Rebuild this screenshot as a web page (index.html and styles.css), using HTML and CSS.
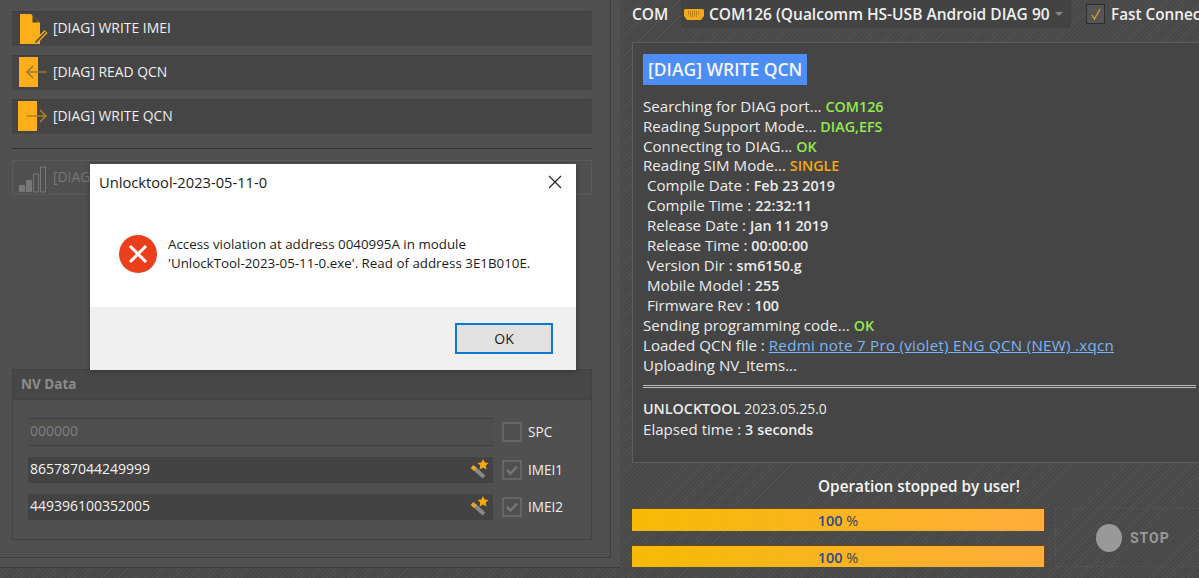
FILE: index.html
```html
<!DOCTYPE html>
<html lang="en">
<head>
<meta charset="utf-8">
<title>UnlockTool</title>
<link rel="stylesheet" href="styles.css">
</head>
<body>
<main class="app">
  <section class="left">
    <div class="left-panel">
      <button class="action">
        <svg class="ico" width="31" height="34" viewBox="0 0 31 34"><path d="M3 2h11l9 9v21H3z" fill="#fdae19"/><path d="M15.500 3l6.500 7.500h-6.500z" fill="#4a4336"/><path d="M18 31l11-11.500" stroke="#f0a81e" stroke-width="4.200"/><path d="M18.500 30.500l10-10.500" stroke="#4f4a40" stroke-width="1.500"/></svg>
        <span>[DIAG] WRITE IMEI</span>
      </button>
      <button class="action">
        <svg class="ico" width="31" height="34" viewBox="0 0 31 34"><path d="M2 1h19v30H2z" fill="#fdae19"/><path d="M30 16H11M16 10l-6 6 6 6" fill="none" stroke="#9a7a30" stroke-width="1.600"/></svg>
        <span>[DIAG] READ QCN</span>
      </button>
      <button class="action">
        <svg class="ico" width="31" height="34" viewBox="0 0 31 34"><path d="M1 1h19v30H1z" fill="#fdae19"/><path d="M10 16h19M23 10l6 6-6 6" fill="none" stroke="#a8802c" stroke-width="1.600"/></svg>
        <span>[DIAG] WRITE QCN</span>
      </button>
      <hr class="rule">
      <button class="action disabled">
        <svg class="ico" width="31" height="34" viewBox="0 0 31 34"><path d="M2 24h6v7H2zM9 19h6v12H9z" fill="#777"/><path d="M16.500 13h5v18h-5zM23.500 6h5v25h-5z" fill="none" stroke="#777"/></svg>
        <span>[DIAG</span>
      </button>
      <section class="nv">
        <h2 class="nv-head">NV Data</h2>
        <div class="nv-body">
          <div class="nv-row first">
            <div class="field empty">000000</div>
            <span class="check"></span><span class="nv-label">SPC</span>
          </div>
          <div class="nv-row">
            <div class="field">865787044249999
              <svg class="wand" width="19" height="20" viewBox="0 0 19 20"><path d="M4 9l10 9" stroke="#8a8a8a" stroke-width="4"/><path d="M2 7.500l3.500 3" stroke="#f0a81e" stroke-width="4"/><path d="M13 0l1.700 3.600 3.800.4-2.800 2.600.8 3.800-3.500-2-3.500 2 .8-3.800L7.500 4l3.800-.4z" fill="#f7a90f"/></svg>
            </div>
            <span class="check on"><svg width="14" height="12" viewBox="0 0 14 12"><path d="M2 6l3.500 3.500L12 2.500" fill="none" stroke="#777" stroke-width="2.500"/></svg></span><span class="nv-label">IMEI1</span>
          </div>
          <div class="nv-row">
            <div class="field">449396100352005
              <svg class="wand" width="19" height="20" viewBox="0 0 19 20"><path d="M4 9l10 9" stroke="#8a8a8a" stroke-width="4"/><path d="M2 7.500l3.500 3" stroke="#f0a81e" stroke-width="4"/><path d="M13 0l1.700 3.600 3.800.4-2.800 2.600.8 3.800-3.500-2-3.500 2 .8-3.800L7.500 4l3.800-.4z" fill="#f7a90f"/></svg>
            </div>
            <span class="check on"><svg width="14" height="12" viewBox="0 0 14 12"><path d="M2 6l3.500 3.500L12 2.500" fill="none" stroke="#777" stroke-width="2.500"/></svg></span><span class="nv-label">IMEI2</span>
          </div>
        </div>
      </section>
    </div>
  </section>

  <section class="right">
    <div class="com-row">
      <span class="com-label">COM</span>
      <div class="com-select">
        <svg class="port" width="20" height="11" viewBox="0 0 20 11"><path d="M1 0h18l1 1v6l-3 4H3L0 7V1z" fill="#f6a81c"/><path d="M4 3h12M4 5h12M6 7h8" stroke="#8a5a10" stroke-dasharray="1 1"/></svg>
        <span class="com-name">COM126 (Qualcomm HS-USB Android DIAG 90</span>
        <span class="caret"></span>
      </div>
      <span class="check fast"><svg width="14" height="15" viewBox="0 0 14 15"><path d="M3 8l2.500 4L11 2" fill="none" stroke="#d8a030" stroke-width="1.300"/></svg></span>
      <span class="fast-label">Fast Connec</span>
    </div>

    <div class="log">
      <div class="log-title">[DIAG] WRITE QCN</div>
      <div class="log-lines">
        <p>Searching for DIAG port... <b class="ok">COM126</b></p>
        <p>Reading Support Mode... <b class="ok">DIAG,EFS</b></p>
        <p>Connecting to DIAG... <b class="ok">OK</b></p>
        <p>Reading SIM Mode... <b class="warn">SINGLE</b></p>
        <p class="tall">&nbsp;Compile Date : <b>Feb 23 2019</b></p>
        <p class="tall">&nbsp;Compile Time : <b>22:32:11</b></p>
        <p class="tall">&nbsp;Release Date : <b>Jan 11 2019</b></p>
        <p class="tall">&nbsp;Release Time : <b>00:00:00</b></p>
        <p class="tall">&nbsp;Version Dir : <b>sm6150.g</b></p>
        <p class="tall">&nbsp;Mobile Model : <b>255</b></p>
        <p class="tall">&nbsp;Firmware Rev : <b>100</b></p>
        <p class="tall">Sending programming code... <b class="ok">OK</b></p>
        <p class="tall">Loaded QCN file : <a class="link">Redmi note 7 Pro (violet) ENG QCN (NEW) .xqcn</a></p>
        <p class="tall">Uploading NV_Items...</p>
      </div>
      <hr class="log-rule">
      <p class="tall"><b>UNLOCKTOOL</b> <span class="ver">2023.05.25.0</span></p>
      <p class="tall">Elapsed time : <b>3</b> <b>seconds</b></p>
    </div>

    <div class="status">Operation stopped by user!</div>
    <div class="bottom">
      <div class="bars">
        <div class="bar"><b>100</b>&nbsp;%</div>
        <div class="bar short"><b>100</b>&nbsp;%</div>
      </div>
      <div class="stop"><span class="stop-dot"></span><span>STOP</span></div>
    </div>
  </section>
</main>

<div class="dialog" role="dialog">
  <div class="dialog-top">
    <div class="dialog-title">
      <span>Unlocktool-2023-05-11-0</span>
      <svg width="14" height="14" viewBox="0 0 14 14"><path d="M1 1l12 12M13 1L1 13" stroke="#222" stroke-width="1.100"/></svg>
    </div>
    <div class="dialog-msg">
      <svg width="38" height="38" viewBox="0 0 38 38"><circle cx="19" cy="19" r="19" fill="#ea3f1a"/><path d="M11 11l16 16M27 11L11 27" stroke="#fff" stroke-width="3"/></svg>
      <p>Access violation at address 0040995A in module<br>'UnlockTool-2023-05-11-0.exe'. Read of address 3E1B010E.</p>
    </div>
  </div>
  <div class="dialog-foot"><button class="ok-btn">OK</button></div>
</div>
</body>
</html>
```
FILE: styles.css
```css
* { box-sizing: border-box; }
html, body { margin: 0; height: 100%; overflow: hidden; }
body {
  width: 1199px;
  height: 578px;
  position: relative;
  font-family: "Open Sans", "Noto Sans", sans-serif;
  font-size: 13px;
  color: #f0f0f0;
  background: #4b4b4b repeating-linear-gradient(135deg, #505050 0 1px, #484848 1px 3px);
}
p { margin: 0; }
.app { display: flex; height: 568px; }

.left { width: 620px; flex: none; background: #505050; border-bottom: 1px solid #3d3d3d; }
.left-panel {
  width: 611px;
  height: 558px;
  padding: 11px 18px 0 12px;
  background: #505050;
  border-right: 1px solid #3d3d3d;
  border-bottom: 1px solid #3d3d3d;
}
.action {
  display: flex;
  align-items: center;
  width: 580px;
  height: 35px;
  margin: 0 0 9px;
  padding: 0 0 3px 4px;
  gap: 5px;
  border: 1px solid #474747;
  border-top-color: #404040;
  background: #454545;
  color: #efefef;
  font-family: inherit;
  font-size: 13.900px;
  text-align: left;
}
.ico { flex: none; margin-bottom: -3px; }
.rule { width: 580px; margin: 14px 0 11px; border: 0; border-top: 1px solid #333; }
.action.disabled { background: #505050; border-color: #5a5a5a; color: #777; }

.nv { margin-top: 174px; width: 580px; height: 171px; border: 1px solid #424242; }
.nv-head {
  height: 30px;
  margin: 0;
  padding: 0 8px;
  font-size: 13.500px;
  font-weight: 700;
  line-height: 28px;
  color: #8c8c8c;
  background: #474747;
  border-bottom: 1px solid #424242;
}
.nv-body { padding: 18px 0 0 15px; display: flex; flex-direction: column; gap: 11px; }
.nv-row { display: flex; align-items: center; height: 26px; }
.nv-row.first { height: 28px; }
.field {
  display: flex;
  align-items: center;
  justify-content: space-between;
  width: 465px;
  height: 26px;
  padding: 0 4px 4px 2px;
  background: #434343;
  color: #f2f2f2;
  font-size: 14px;
}
.field.empty { height: 28px; background: #4e4e4e; border-top: 1px solid #404040; border-bottom: 1px solid #404040; color: #808080; }
.wand { margin-top: 2px; }
.check {
  display: flex;
  flex: none;
  align-items: center;
  justify-content: center;
  width: 20px;
  height: 20px;
  margin-left: 9px;
  border: 2px solid #666;
  background: #505050;
}
.nv-label { margin-left: 6px; padding-bottom: 2px; font-size: 13.600px; color: #eee; }

.right { flex: 1; min-width: 0; padding-left: 12px; overflow: hidden; }
.com-row { display: flex; align-items: center; height: 28px; white-space: nowrap; }
.com-label { flex: none; width: 49px; font-size: 15.500px; font-weight: 600; }
.com-select {
  display: flex;
  align-items: center;
  gap: 5px;
  flex: none;
  width: 390px;
  height: 28px;
  padding: 0 3px;
  background: #434343;
  font-size: 15.500px;
  font-weight: 600;
}
.port { flex: none; }
.com-name { flex: 1; }
.caret { flex: none; width: 0; height: 0; margin-right: 6px; border: 4px solid transparent; border-top-color: #888; border-bottom: 0; }
.check.fast { flex: none; width: 19px; height: 20px; margin-left: 15px; border: 1px solid #2e2e2e; background: #555; }
.fast-label { flex: none; margin-left: 6px; font-size: 15.300px; font-weight: 600; }

.log {
  width: 620px;
  height: 421px;
  margin-top: 14px;
  padding: 11px 10px 0;
  background: #454545;
  border: 1px solid #5d5d5d;
  border-right: 0;
  font-size: 15.100px;
  line-height: 20px;
  color: #ececec;
}
.log b { font-size: 14.300px; font-weight: 600; }
.ver { font-size: 13.900px; }
.log-title {
  display: inline-block;
  height: 31px;
  padding: 0 5px;
  margin-bottom: 11px;
  background: #4d8df6;
  color: #f5f5f5;
  font-size: 17.500px;
  font-weight: 600;
  line-height: 31px;
}
.log-lines p { height: 19.750px; }
.log-lines .tall { height: 20px; }
.log .ok { color: #94ea4e; }
.log .warn { color: #f7a90f; }
.link { color: #7cb4f5; text-decoration: underline; letter-spacing: .3px; }
.log-rule { width: 553px; margin: 10px 0 10px; border: 0; border-top: 3px double #bbb; }

.status { height: 45px; padding: 13px 0 0; text-align: center; width: 574px; font-size: 15.300px; font-weight: 600; color: #f5f5f5; line-height: 20px; }
.bottom { display: flex; gap: 10px; }
.bars { display: flex; flex: none; flex-direction: column; gap: 14px; width: 413px; }
.bar {
  height: 23px;
  background: linear-gradient(90deg, #f6bb05, #ffad3b);
  border: 1px solid #6b4a1a;
  border-width: 1px 1px 0 0;
  color: #3c3f5a;
  text-align: center;
  font-size: 14.500px;
  line-height: 24px;
}
.bar.short { height: 22px; }
.bar b { color: #2f4a8f; font-weight: 600; }
.stop {
  display: flex;
  flex: none;
  align-items: center;
  gap: 8px;
  width: 150px;
  height: 59px;
  padding-left: 40px;
  border: 1px dashed #555;
  color: #999;
  font-family: Roboto, sans-serif;
  font-size: 14px;
  font-weight: 700;
  letter-spacing: 1px;
}
.stop-dot { width: 26px; height: 28px; border-radius: 50%; background: #999; }

.dialog {
  position: absolute;
  left: 90px;
  top: 164px;
  width: 486px;
  height: 206px;
  display: flex;
  flex-direction: column;
  background: #fff;
  color: #1b1b1b;
  font-family: "Open Sans", "Noto Sans", sans-serif;
  box-shadow: 0 1px 6px rgba(0,0,0,.3);
}
.dialog-top { height: 143px; }
.dialog-title {
  display: flex;
  align-items: center;
  justify-content: space-between;
  height: 36px;
  padding: 0 14px 0 9px;
  font-size: 14.700px;
}
.dialog-msg { display: flex; align-items: center; gap: 11px; padding: 35px 0 0 29px; font-size: 13.350px; line-height: 19px; }
.dialog-foot {
  flex: 1;
  display: flex;
  justify-content: flex-end;
  padding: 16px 23px 0 0;
  background: #f0f0f0;
}
.ok-btn {
  width: 98px;
  height: 31px;
  background: #e1e1e1;
  border: 2px solid #0d78d0;
  color: #1b1b1b;
  font: 14px "Open Sans", sans-serif;
}
```
